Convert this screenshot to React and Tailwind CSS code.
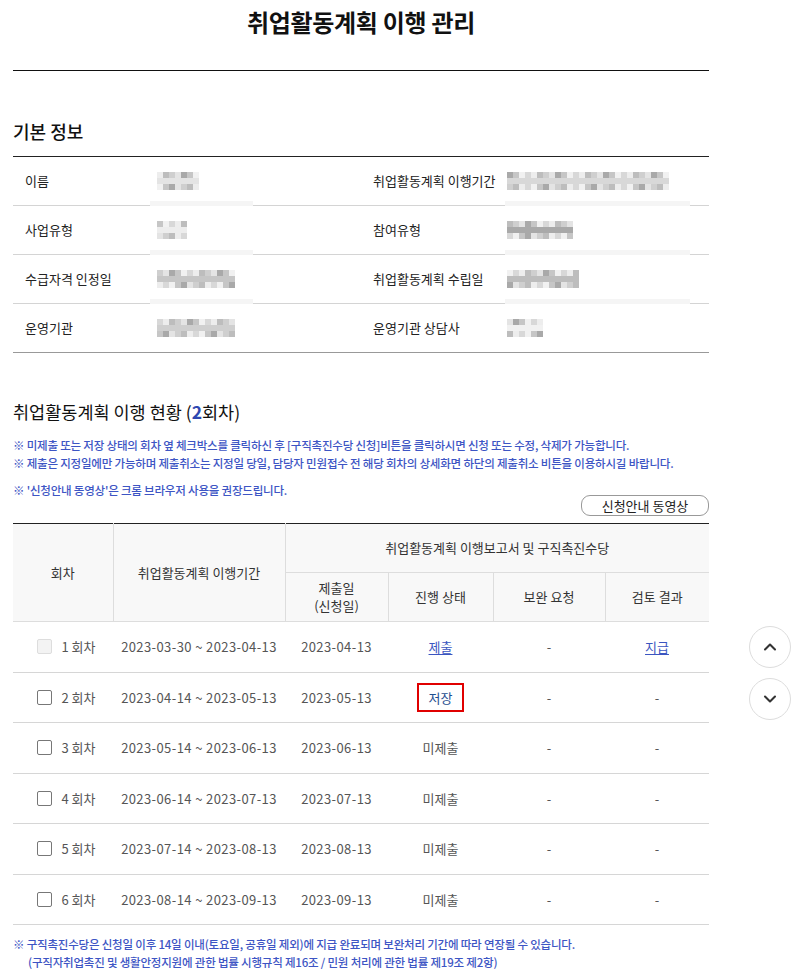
import { ChevronUp, ChevronDown } from 'lucide-react'

const shades = ['#e4e4e4', '#cfcfcf', '#bdbdbd', '#ededed', '#d8d8d8', '#f1f1f1', '#c6c6c6', '#a9a9a9']

function Blur({ cols, seed = 1 }) {
  const cells = []
  for (let r = 0; r < 3; r++) {
    for (let c = 0; c < cols; c++) {
      const v = (c * 7 + r * 5 + seed * 3 + c * r) % shades.length
      cells.push(<span key={`${r}-${c}`} className="block h-[6px] w-[6px]" style={{ background: shades[v] }} />)
    }
  }
  return (
    <div className="grid" style={{ gridTemplateColumns: `repeat(${cols}, 6px)` }}>
      {cells}
    </div>
  )
}

const info = [
  ['이름', 7, '취업활동계획 이행기간', 27],
  ['사업유형', 5, '참여유형', 11],
  ['수급자격 인정일', 13, '취업활동계획 수립일', 12],
  ['운영기관', 13, '운영기관 상담사', 6],
]

const rounds = [
  { n: 1, period: '2023-03-30 ~ 2023-04-13', date: '2023-04-13', status: '제출', result: '지급', disabled: true },
  { n: 2, period: '2023-04-14 ~ 2023-05-13', date: '2023-05-13', status: '저장' },
  { n: 3, period: '2023-05-14 ~ 2023-06-13', date: '2023-06-13', status: '미제출' },
  { n: 4, period: '2023-06-14 ~ 2023-07-13', date: '2023-07-13', status: '미제출' },
  { n: 5, period: '2023-07-14 ~ 2023-08-13', date: '2023-08-13', status: '미제출' },
  { n: 6, period: '2023-08-14 ~ 2023-09-13', date: '2023-09-13', status: '미제출' },
]

function Status({ row }) {
  if (row.status === '제출') return <span className="text-[#3b55c0] underline underline-offset-2">제출</span>
  if (row.status === '저장')
    return <span className="inline-block border-2 border-[#e00000] px-[10px] py-[3px] text-[#1f4f8f]">저장</span>
  return <span>{row.status}</span>
}

export default function App() {
  const font = { fontFamily: '"Noto Sans CJK KR", "Noto Sans", sans-serif' }
  return (
    <div className="relative min-h-[972px] bg-white text-[#222]" style={font}>
      <div className="ml-[13px] w-[696px] pt-[5px]">
        <h1 className="text-center text-[24px] font-bold leading-[34px] tracking-[-0.3px] text-[#111]">취업활동계획 이행 관리</h1>
        <div className="mt-[31px] h-px bg-[#111]" />

        <h2 className="mt-[47px] text-[18px] font-medium leading-[26px] text-[#111]">기본 정보</h2>
        <div className="mt-[12px] border-t border-[#222]">
          {info.map(([l1, c1, l2, c2], i) => (
            <div
              key={l1}
              className={`flex h-[49px] items-center border-b text-[13px] ${i === 3 ? 'border-[#999]' : 'border-[#d4d4d4]'}`}
            >
              <div className="w-[137px] pl-[12px]">{l1}</div>
              <div className="relative flex h-full w-[210px] items-center pl-[7px]">
                <Blur cols={c1} seed={i + 1} />
                {i < 3 && <div className="absolute bottom-[-1px] left-0 h-[5px] w-[103px] bg-[#f5f5f5]" />}
              </div>
              <div className="w-[145px] pl-[13px]">{l2}</div>
              <div className="relative flex h-full flex-1 items-center pl-[2px]">
                <Blur cols={c2 > 20 ? 27 : c2} seed={i + 5} />
                {i < 3 && <div className="absolute bottom-[-1px] left-0 h-[5px] w-[185px] bg-[#f5f5f5]" />}
              </div>
            </div>
          ))}
        </div>

        <h2 className="mt-[46px] text-[17.5px] leading-[26px] text-[#111]">
          취업활동계획 이행 현황 (<b className="font-bold text-[#2f47b0]">2</b>회차)
        </h2>
        <div className="mt-[11px] text-[11.5px] font-medium leading-[18px] tracking-[-0.2px] text-[#3d55c4]">
          <p>※ 미제출 또는 저장 상태의 회차 옆 체크박스를 클릭하신 후 [구직촉진수당 신청]비튼을 클릭하시면 신청 또는 수정, 삭제가 가능합니다.</p>
          <p>※ 제출은 지정일에만 가능하며 제출취소는 지정일 당일, 담당자 민원접수 전 해당 회차의 상세화면 하단의 제출취소 비튼을 이용하시길 바랍니다.</p>
          <p className="mt-[9px]">※ '신청안내 동영상'은 크롬 브라우저 사용을 권장드립니다.</p>
        </div>
        <div className="mt-[-4px] flex justify-end">
          <button className="h-[21px] w-[128px] rounded-[9px] border border-[#999] text-[13px] leading-[19px] text-[#222]">
            신청안내 동영상
          </button>
        </div>

        <table className="mt-[7px] w-full border-collapse border-t border-[#222] text-[13px]">
          <colgroup>
            <col className="w-[100px]" />
            <col className="w-[172px]" />
            <col className="w-[103px]" />
            <col className="w-[105px]" />
            <col className="w-[112px]" />
            <col className="w-[104px]" />
          </colgroup>
          <thead className="bg-[#f8f8f8] text-[#333]">
            <tr className="h-[49px]">
              <th rowSpan={2} className="border-b border-r border-[#ddd] font-normal">회차</th>
              <th rowSpan={2} className="border-b border-r border-[#ddd] font-normal">취업활동계획 이행기간</th>
              <th colSpan={4} className="border-b border-[#ddd] font-normal">취업활동계획 이행보고서 및 구직촉진수당</th>
            </tr>
            <tr className="h-[49px]">
              <th className="border-b border-r border-[#ddd] font-normal leading-[18px]">
                제출일
                <br />
                (신청일)
              </th>
              <th className="border-b border-r border-[#ddd] font-normal">진행 상태</th>
              <th className="border-b border-r border-[#ddd] font-normal">보완 요청</th>
              <th className="border-b border-[#ddd] font-normal">검토 결과</th>
            </tr>
          </thead>
          <tbody className="text-center text-[#555]">
            {rounds.map((r) => (
              <tr key={r.n} className="h-[50.5px] border-b border-[#d6d6d6]">
                <td>
                  <div className="flex items-center justify-center gap-[9px] pl-[7px]">
                    <span
                      className={`block h-[15px] w-[15px] rounded-[2px] border ${
                        r.disabled ? 'border-[#ddd] bg-[#f3f3f3]' : 'border-[#777] bg-white'
                      }`}
                    />
                    <span>{r.n} 회차</span>
                  </div>
                </td>
                <td className="tracking-[0.4px]">{r.period}</td>
                <td className="tracking-[0.4px]">{r.date}</td>
                <td>
                  <Status row={r} />
                </td>
                <td>-</td>
                <td>{r.result ? <span className="text-[#3b55c0] underline underline-offset-2">{r.result}</span> : '-'}</td>
              </tr>
            ))}
          </tbody>
        </table>

        <div className="mt-[10px] text-[11.5px] font-medium leading-[18px] tracking-[-0.2px] text-[#3d55c4]">
          <p>※ 구직촉진수당은 신청일 이후 14일 이내(토요일, 공휴일 제외)에 지급 완료되며 보완처리 기간에 따라 연장될 수 있습니다.</p>
          <p className="pl-[15px]">(구직자취업촉진 및 생활안정지원에 관한 법률 시행규칙 제16조 / 민원 처리에 관한 법률 제19조 제2항)</p>
        </div>
      </div>

      <div className="absolute left-[749px] top-[626px] flex flex-col gap-[10px]">
        <button className="flex h-[42px] w-[42px] items-center justify-center rounded-full border border-[#ddd] bg-white text-[#333]">
          <ChevronUp size={20} strokeWidth={2.5} />
        </button>
        <button className="flex h-[42px] w-[42px] items-center justify-center rounded-full border border-[#ddd] bg-white text-[#333]">
          <ChevronDown size={20} strokeWidth={2.5} />
        </button>
      </div>
    </div>
  )
}
